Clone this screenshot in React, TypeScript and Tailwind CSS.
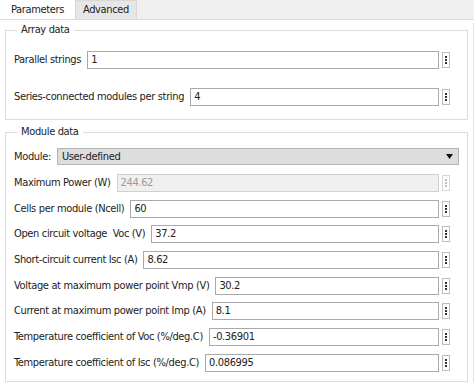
const font = {
  fontFamily: '"DejaVu Sans Condensed", "DejaVu Sans", sans-serif',
  letterSpacing: "-0.35px",
};

function Dots({ disabled }: { disabled?: boolean }) {
  return (
    <div
      className={`ml-[3px] flex h-[16px] w-[8px] shrink-0 flex-col items-center justify-center gap-[1px] border ${
        disabled ? "border-[#d6d6d6]" : "border-[#bdbdbd]"
      } bg-white`}
    >
      <span className={`h-[2px] w-[2px] ${disabled ? "bg-[#bdbdbd]" : "bg-[#333]"}`} />
      <span className={`h-[2px] w-[2px] ${disabled ? "bg-[#bdbdbd]" : "bg-[#333]"}`} />
      <span className={`h-[2px] w-[2px] ${disabled ? "bg-[#bdbdbd]" : "bg-[#333]"}`} />
    </div>
  );
}

function Field({
  label,
  value,
  disabled,
}: {
  label: string;
  value: string;
  disabled?: boolean;
}) {
  return (
    <div className="flex items-center pr-[9px]">
      <span className="whitespace-pre pr-[6px]">{label}</span>
      <div
        className={`flex h-[18px] flex-1 items-center border px-[3px] ${
          disabled
            ? "border-[#d0d0d0] bg-[#f0f0f0] text-[#9a9a9a]"
            : "border-[#a9a9a9] bg-white"
        }`}
      >
        {value}
      </div>
      <Dots disabled={disabled} />
    </div>
  );
}

export default function App() {
  const rows: [string, string][] = [
    ["Cells per module (Ncell)", "60"],
    ["Open circuit voltage  Voc (V)", "37.2"],
    ["Short-circuit current Isc (A)", "8.62"],
    ["Voltage at maximum power point Vmp (V)", "30.2"],
    ["Current at maximum power point Imp (A)", "8.1"],
    ["Temperature coefficient of Voc (%/deg.C)", "-0.36901"],
    ["Temperature coefficient of Isc (%/deg.C)", "0.086995"],
  ];

  return (
    <div
      className="h-[389px] w-[474px] overflow-hidden bg-white text-[11px] leading-[14px] text-[#222]"
      style={font}
    >
      <div className="flex h-[20px] border-b border-[#dcdcdc] bg-[#f0f0f0]">
        <div className="flex w-[75px] items-center justify-center bg-white">Parameters</div>
        <div className="flex w-[62px] items-center justify-center border-x border-t border-[#d9d9d9] bg-[#e6e6e6]">
          Advanced
        </div>
      </div>

      <div className="border-r border-[#e4e4e4] pl-[5px] pr-[5px]">
        <fieldset className="mt-[3px] border border-[#dcdcdc] px-[8px] pb-[13px]">
          <legend className="ml-[3px] px-[4px]">Array data</legend>
          <div className="mt-[14px] flex flex-col gap-[19px]">
            <Field label="Parallel strings" value="1" />
            <Field label="Series-connected modules per string" value="4" />
          </div>
        </fieldset>

        <fieldset className="mt-[5px] border border-[#dcdcdc] px-[8px] pb-[9px]">
          <legend className="ml-[3px] px-[4px]">Module data</legend>
          <div className="mt-[9px] flex items-center">
            <span className="pr-[6px]">Module:</span>
            <div className="flex h-[17px] flex-1 items-center justify-between border border-[#b4b4b4] bg-[#dddddd] pl-[4px] pr-[5px]">
              <span>User-defined</span>
              <svg width="7" height="5" viewBox="0 0 7 5">
                <path d="M0 0h7L3.5 5z" fill="#111" />
              </svg>
            </div>
          </div>
          <div className="mt-[9px] flex flex-col gap-[7.7px]">
            <Field label="Maximum Power (W)" value="244.62" disabled />
            {rows.map(([l, v]) => (
              <Field key={l} label={l} value={v} />
            ))}
          </div>
        </fieldset>
      </div>
    </div>
  );
}
